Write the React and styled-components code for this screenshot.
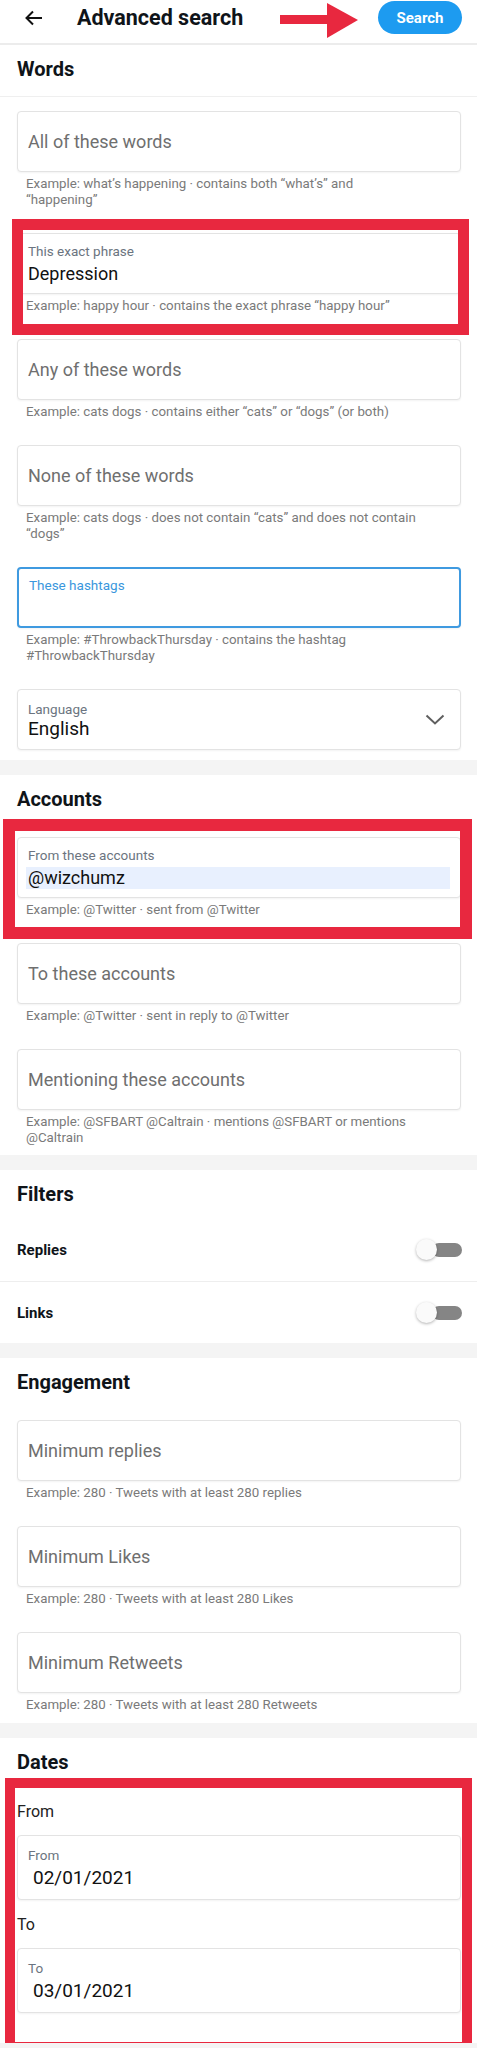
import React from 'react';
import styled, { createGlobalStyle } from 'styled-components';

const GlobalStyle = createGlobalStyle`
  * { box-sizing: border-box; }
  body {
    margin: 0;
    background: #f4f4f4;
    font-family: Roboto, 'Noto Sans', Arial, sans-serif;
    color: #14171a;
  }
`;

const Page = styled.div`
  width: 477px;
  background: #f4f4f4;
`;

const Header = styled.header`
  height: 45px;
  display: flex;
  align-items: center;
  padding: 0 15px 8px 25px;
  background: #fff;
  border-bottom: 2px solid #ececec;
`;

const BackButton = styled.svg`
  width: 18px;
  height: 16px;
  margin-right: 34px;
  flex-shrink: 0;
`;

const Title = styled.h1`
  flex: 1;
  margin: 0;
  font-size: 21.5px;
  font-weight: 700;
  color: #0f1419;
`;

const Pointer = styled.svg`
  width: 78px;
  height: 35px;
  margin-right: 20px;
  margin-top: 6px;
  flex-shrink: 0;
`;

const SearchButton = styled.button`
  width: 84px;
  height: 33px;
  border: none;
  border-radius: 17px;
  background: #1d9bf0;
  color: #fff;
  font-family: inherit;
  font-size: 15px;
  font-weight: 700;
`;

const Sections = styled.div`
  display: flex;
  flex-direction: column;
  gap: 15px;
`;

const Section = styled.section`
  background: #fff;
`;

const SectionTitle = styled.h2`
  margin: 0;
  padding: 0 17px;
  height: ${p => (p.$divider ? '52px' : '48px')};
  line-height: 48px;
  font-size: 20px;
  font-weight: 700;
  color: #0f1419;
  border-bottom: ${p => (p.$divider ? '1px solid #efefef' : 'none')};
`;

const FieldList = styled.div`
  display: flex;
  flex-direction: column;
  gap: 25px;
  padding: 14px 16px ${p => p.$bottom ?? 10}px 17px;
`;

const Highlight = styled.div`
  position: relative;
  &::after {
    content: '';
    position: absolute;
    top: ${p => p.$top}px;
    right: ${p => p.$right}px;
    bottom: ${p => p.$bottom}px;
    left: ${p => p.$left}px;
    border: ${p => p.$w || 11}px solid #e8283f;
    pointer-events: none;
  }
`;

const FieldGroup = styled.div``;

const Box = styled.div`
  height: ${p => p.$height || 61}px;
  display: flex;
  flex-direction: column;
  justify-content: ${p => (p.$focused ? 'flex-start' : 'center')};
  gap: 4px;
  padding: ${p => (p.$focused ? '8px 10px 0' : '0 10px')};
  background: #fff;
  border: ${p => (p.$focused ? '2px solid #3f9ae0' : '1px solid #e3e3e3')};
  border-radius: 4px;
  box-shadow: 0 1px 2px rgba(0, 0, 0, 0.05);
`;

const SelectBox = styled(Box)`
  flex-direction: row;
  align-items: center;
  justify-content: space-between;
  padding-right: 15px;
`;

const Placeholder = styled.span`
  font-size: 18px;
  color: #6f6f6f;
`;

const Label = styled.span`
  font-size: 13.5px;
  line-height: 16px;
  color: ${p => (p.$focused ? '#3a97dd' : '#6b7480')};
`;

const Value = styled.span`
  font-size: ${p => p.$size || 18}px;
  line-height: 22px;
  color: #111;
  padding-left: ${p => p.$indent || 0}px;
  ${p => p.$autofill && 'background: #e8f0fe; margin-left: -2px; padding-left: 2px;'}
`;

const Helper = styled.p`
  margin: 4px 0 0;
  padding-left: 9px;
  padding-right: 35px;
  font-size: 13.3px;
  line-height: 16px;
  color: #7a7a7a;
`;

const ToggleList = styled.div`
  padding-top: 1px;
`;

const ToggleRow = styled.div`
  height: 62px;
  display: flex;
  align-items: center;
  justify-content: space-between;
  padding: 0 15px 0 17px;
  font-size: 15px;
  font-weight: 700;
  color: #0f1419;
  & + & {
    border-top: 1px solid #eeeeee;
  }
`;

const Toggle = styled.div`
  position: relative;
  width: 30px;
  height: 14px;
  margin-left: 16px;
  border-radius: 7px;
  background: #858585;
  &::after {
    content: '';
    position: absolute;
    left: -16px;
    top: -4px;
    width: 21px;
    height: 21px;
    border-radius: 50%;
    background: #fafafa;
    box-shadow: 0 1px 3px rgba(0, 0, 0, 0.3);
  }
`;

const DateBlock = styled(Highlight)`
  padding: 0 0 30px;
`;

const DateLabel = styled.div`
  font-size: 16px;
  line-height: 24px;
  color: #222;
  margin: ${p => (p.$first ? '0' : '13px')} 0 11px;
`;

const Field = ({ placeholder, label, value, help, focused, autofill }) => (
  <FieldGroup>
    <Box $focused={focused}>
      {placeholder && <Placeholder>{placeholder}</Placeholder>}
      {label && <Label $focused={focused}>{label}</Label>}
      {value && <Value $autofill={autofill}>{value}</Value>}
    </Box>
    <Helper>{help}</Helper>
  </FieldGroup>
);

const Chevron = () => (
  <svg width="20" height="11" viewBox="0 0 20 11">
    <path d="M1.5 1.5 L10 9.5 L18.5 1.5" fill="none" stroke="#5f5f5f" strokeWidth="2" />
  </svg>
);

export default function App() {
  return (
    <Page>
      <GlobalStyle />
      <Header>
        <BackButton viewBox="0 0 18 16">
          <path d="M17 8 H2 M8 1.5 L1.5 8 L8 14.5" fill="none" stroke="#111" strokeWidth="2" />
        </BackButton>
        <Title>Advanced search</Title>
        <Pointer viewBox="0 0 78 35">
          <rect x="0" y="12" width="50" height="9" fill="#e8283f" />
          <polygon points="47,0 78,17 47,35" fill="#e8283f" />
        </Pointer>
        <SearchButton>Search</SearchButton>
      </Header>

      <Sections>
        <Section>
          <SectionTitle $divider>Words</SectionTitle>
          <FieldList>
            <Field
              placeholder="All of these words"
              help="Example: what’s happening · contains both “what’s” and “happening”"
            />
            <Highlight $top={-14} $bottom={-21} $left={-5} $right={-8}>
              <Field
                label="This exact phrase"
                value="Depression"
                help="Example: happy hour · contains the exact phrase “happy hour”"
              />
            </Highlight>
            <Field
              placeholder="Any of these words"
              help="Example: cats dogs · contains either “cats” or “dogs” (or both)"
            />
            <Field
              placeholder="None of these words"
              help="Example: cats dogs · does not contain “cats” and does not contain “dogs”"
            />
            <Field
              focused
              label="These hashtags"
              help="Example: #ThrowbackThursday · contains the hashtag #ThrowbackThursday"
            />
            <SelectBox>
              <div>
                <Label>Language</Label>
                <Value as="div" $size={19}>English</Value>
              </div>
              <Chevron />
            </SelectBox>
          </FieldList>
        </Section>

        <Section>
          <SectionTitle>Accounts</SectionTitle>
          <FieldList $bottom={9}>
            <Highlight $top={-18} $bottom={-21} $left={-14} $right={-11} $w={12}>
              <Field
                label="From these accounts"
                value="@wizchumz"
                autofill
                help="Example: @Twitter · sent from @Twitter"
              />
            </Highlight>
            <Field
              placeholder="To these accounts"
              help="Example: @Twitter · sent in reply to @Twitter"
            />
            <Field
              placeholder="Mentioning these accounts"
              help="Example: @SFBART @Caltrain · mentions @SFBART or mentions @Caltrain"
            />
          </FieldList>
        </Section>

        <Section>
          <SectionTitle>Filters</SectionTitle>
          <ToggleList>
            <ToggleRow>
              Replies
              <Toggle />
            </ToggleRow>
            <ToggleRow>
              Links
              <Toggle />
            </ToggleRow>
          </ToggleList>
        </Section>

        <Section>
          <SectionTitle>Engagement</SectionTitle>
          <FieldList>
            <Field placeholder="Minimum replies" help="Example: 280 · Tweets with at least 280 replies" />
            <Field placeholder="Minimum Likes" help="Example: 280 · Tweets with at least 280 Likes" />
            <Field placeholder="Minimum Retweets" help="Example: 280 · Tweets with at least 280 Retweets" />
          </FieldList>
        </Section>

        <Section>
          <SectionTitle>Dates</SectionTitle>
          <FieldList $bottom={0}>
            <DateBlock $top={-22} $bottom={-9} $left={-12} $right={-11} $w={10}>
              <DateLabel $first>From</DateLabel>
              <Box $height={65}>
                <Label>From</Label>
                <Value $size={19} $indent={5}>02/01/2021</Value>
              </Box>
              <DateLabel>To</DateLabel>
              <Box $height={65}>
                <Label>To</Label>
                <Value $size={19} $indent={5}>03/01/2021</Value>
              </Box>
            </DateBlock>
          </FieldList>
        </Section>
      </Sections>
    </Page>
  );
}
